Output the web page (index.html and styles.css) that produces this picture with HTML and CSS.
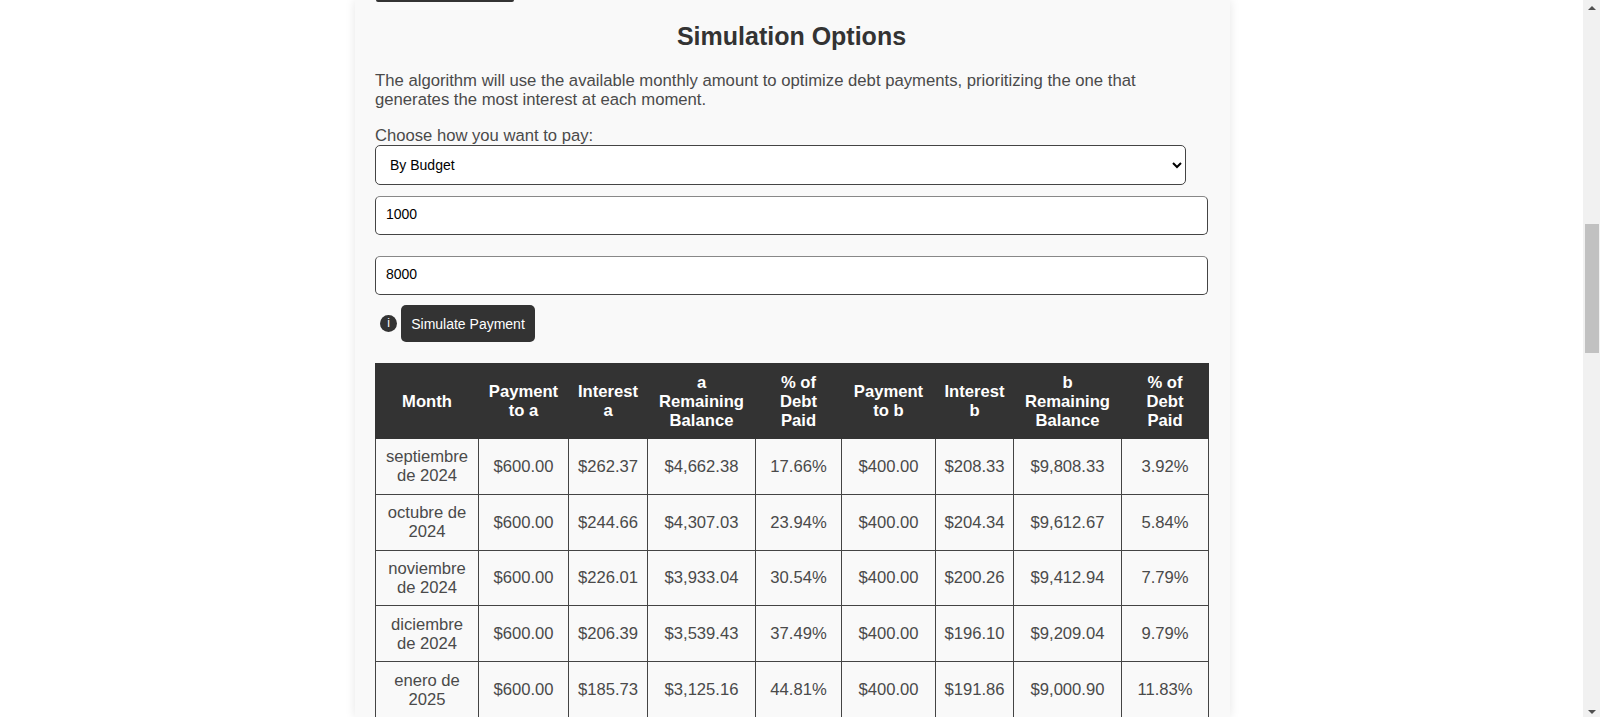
FILE: index.html
```html
<!DOCTYPE html>
<html lang="en">
<head>
    <meta charset="UTF-8">
    <meta name="viewport" content="width=device-width, initial-scale=1.0">
    <title>Simulation Options</title>
    <link rel="stylesheet" href="styles.css">
</head>
<body>
    <div class="page">
        <main class="card">
            <div class="prev-button"></div>
            <h2>Simulation Options</h2>
            <p class="intro">The algorithm will use the available monthly amount to optimize debt payments, prioritizing the one that generates the most interest at each moment.</p>
            <label class="pay-label" for="payMode">Choose how you want to pay:</label>
            <select id="payMode" class="pay-select">
                <option>By Budget</option>
            </select>
            <input class="field" type="text" value="1000">
            <input class="field field-second" type="text" value="8000">
            <div class="actions">
                <span class="info">i</span>
                <button class="simulate">Simulate Payment</button>
            </div>
            <table>
                <colgroup>
                    <col class="col-month">
                    <col class="col-pay-a">
                    <col class="col-int-a">
                    <col class="col-bal-a">
                    <col class="col-pct-a">
                    <col class="col-pay-b">
                    <col class="col-int-b">
                    <col class="col-bal-b">
                    <col class="col-pct-b">
                </colgroup>
                <thead>
                    <tr>
                        <th>Month</th>
                        <th>Payment to a</th>
                        <th>Interest a</th>
                        <th>a Remaining Balance</th>
                        <th>% of Debt Paid</th>
                        <th>Payment to b</th>
                        <th>Interest b</th>
                        <th>b Remaining Balance</th>
                        <th>% of Debt Paid</th>
                    </tr>
                </thead>
                <tbody>
                    <tr><td>septiembre de 2024</td><td>$600.00</td><td>$262.37</td><td>$4,662.38</td><td>17.66%</td><td>$400.00</td><td>$208.33</td><td>$9,808.33</td><td>3.92%</td></tr>
                    <tr><td>octubre de 2024</td><td>$600.00</td><td>$244.66</td><td>$4,307.03</td><td>23.94%</td><td>$400.00</td><td>$204.34</td><td>$9,612.67</td><td>5.84%</td></tr>
                    <tr><td>noviembre de 2024</td><td>$600.00</td><td>$226.01</td><td>$3,933.04</td><td>30.54%</td><td>$400.00</td><td>$200.26</td><td>$9,412.94</td><td>7.79%</td></tr>
                    <tr><td>diciembre de 2024</td><td>$600.00</td><td>$206.39</td><td>$3,539.43</td><td>37.49%</td><td>$400.00</td><td>$196.10</td><td>$9,209.04</td><td>9.79%</td></tr>
                    <tr><td>enero de 2025</td><td>$600.00</td><td>$185.73</td><td>$3,125.16</td><td>44.81%</td><td>$400.00</td><td>$191.86</td><td>$9,000.90</td><td>11.83%</td></tr>
                </tbody>
            </table>
        </main>
    </div>
    <div class="scrollbar">
        <span class="arrow arrow-up"></span>
        <div class="thumb"></div>
        <span class="arrow arrow-down"></span>
    </div>
</body>
</html>
```

FILE: styles.css
```css
*{
    box-sizing: border-box;
}
html, body{
    margin: 0;
    height: 100%;
    overflow: hidden;
}
body{
    display: flex;
    font-family: "Liberation Sans", Arial, sans-serif;
    font-size: 16.64px;
    color: #4a4a4a;
    background: #fff;
}
.page{
    flex: 1;
    height: 717px;
    overflow: hidden;
    display: flex;
    justify-content: center;
    padding-left: 2px;
}
.card{
    width: 875px;
    height: 717px;
    overflow: hidden;
    padding: 0 22px 0 20px;
    background: #f9f9f9;
    box-shadow: 0 0 10px rgba(0, 0, 0, 0.1);
}
.prev-button{
    width: 138px;
    height: 2px;
    margin-left: 1px;
    background: #333;
    border-radius: 0 0 4px 4px;
}
h2{
    margin: 20px 0 0;
    font-size: 25px;
    line-height: 28px;
    color: #333;
    text-align: center;
}
.intro{
    margin: 21px 0 0;
    font-size: 16.7px;
    line-height: 19px;
}
.pay-label{
    display: block;
    margin-top: 17px;
    line-height: 19px;
}
.pay-select{
    display: block;
    width: 811px;
    height: 40px;
    padding: 0 10px;
    border: 1px solid #444;
    border-radius: 5px;
    background-color: #fff;
    font-family: inherit;
    font-size: 14px;
    color: #000;
}
.field{
    display: block;
    width: 833px;
    height: 39px;
    margin-top: 11px;
    padding: 0 10px 3px;
    border: 1px solid #444;
    border-top-color: #888;
    border-radius: 5px;
    background: #fff;
    font-family: inherit;
    font-size: 14px;
    color: #000;
}
.field-second{
    margin-top: 21px;
}
.actions{
    display: flex;
    align-items: center;
    gap: 4px;
    margin-top: 10px;
    padding-left: 5px;
}
.info{
    width: 17px;
    height: 17px;
    border-radius: 50%;
    background: #333;
    color: #fff;
    font-size: 12px;
    line-height: 17px;
    text-align: center;
}
.simulate{
    width: 134px;
    height: 37px;
    padding: 0;
    border: 0;
    border-radius: 5px;
    background: #333;
    color: #fff;
    font-family: inherit;
    font-size: 14px;
}
table{
    width: 833px;
    margin-top: 21px;
    border-collapse: collapse;
    table-layout: fixed;
    text-align: center;
}
th{
    padding: 8.5px 8px;
    border: 1px solid #333;
    background: #333;
    color: #fff;
    line-height: 19px;
}
td{
    padding: 8.4px 8px;
    border: 1px solid #444;
    line-height: 19px;
}
.col-month{ width: 103px; }
.col-pay-a{ width: 90px; }
.col-int-a{ width: 79px; }
.col-bal-a{ width: 108px; }
.col-pct-a{ width: 86px; }
.col-pay-b{ width: 94px; }
.col-int-b{ width: 78px; }
.col-bal-b{ width: 108px; }
.col-pct-b{ width: 87px; }
.scrollbar{
    position: relative;
    flex: 0 0 17px;
    height: 717px;
    background: #f1f1f1;
}
.thumb{
    position: absolute;
    top: 224px;
    left: 2px;
    width: 14px;
    height: 129px;
    background: #c1c1c1;
}
.arrow{
    position: absolute;
    left: 5px;
    width: 0;
    height: 0;
    border-left: 4px solid transparent;
    border-right: 4px solid transparent;
}
.arrow-up{
    top: 6px;
    border-bottom: 4px solid #505050;
}
.arrow-down{
    bottom: 3px;
    border-top: 4px solid #505050;
}
```
